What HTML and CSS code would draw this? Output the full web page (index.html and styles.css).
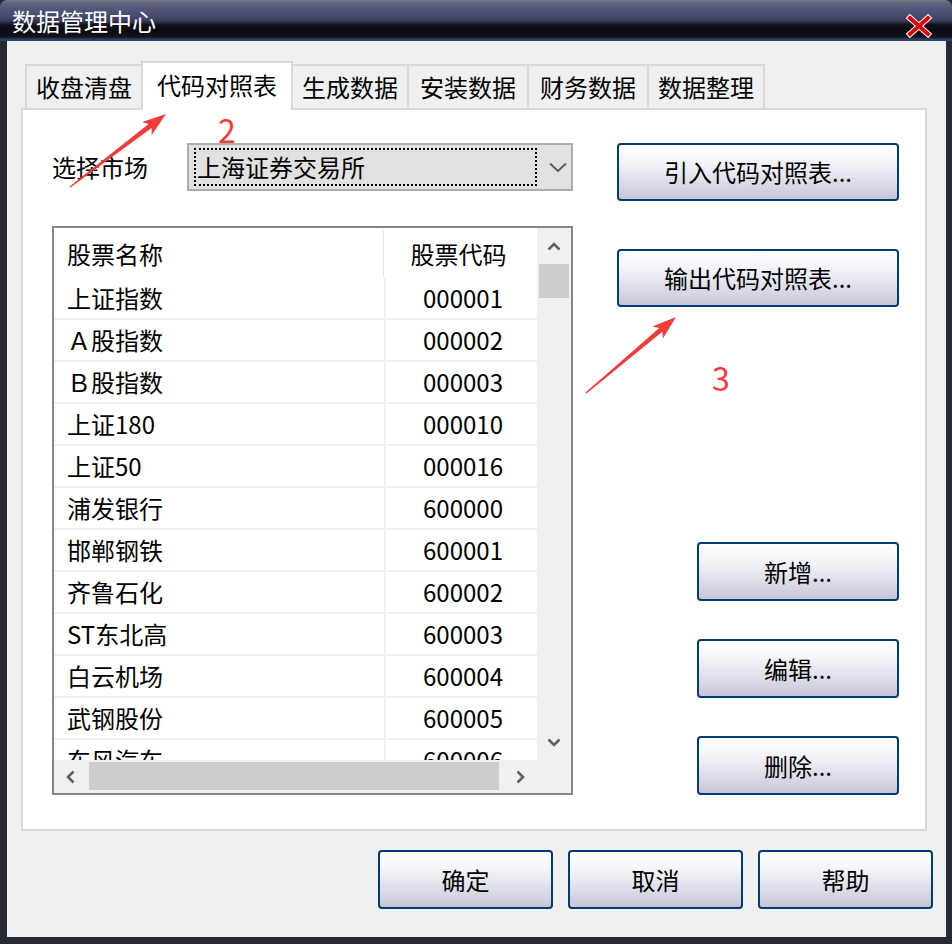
FILE: index.html
```html
<!DOCTYPE html>
<html lang="zh-CN">
<head>
  <meta charset="UTF-8" />
  <title>数据管理中心</title>
  <link rel="stylesheet" href="styles.css">
</head>
<body>
  <div class="window">
    <div class="titlebar">
      <span class="title">数据管理中心</span>
      <svg class="close" width="26" height="24" viewBox="0 0 26 24">
        <path d="M4 4 L22 20 M22 4 L4 20" stroke="#ffffff" stroke-width="6" stroke-linecap="square" fill="none"/>
        <path d="M4 4 L22 20 M22 4 L4 20" stroke="#e40000" stroke-width="4" stroke-linecap="square" fill="none"/>
      </svg>
    </div>

    <div class="client">
      <!-- 页签 -->
      <div class="tabs">
        <div class="tab">收盘清盘</div>
        <div class="tab active">代码对照表</div>
        <div class="tab">生成数据</div>
        <div class="tab roomy">安装数据</div>
        <div class="tab roomy">财务数据</div>
        <div class="tab">数据整理</div>
      </div>

      <div class="panel">
        <div class="left">
          <div class="market">
            <span class="label">选择市场</span>
            <div class="combo">
              <div class="combo-focus">上海证券交易所</div>
              <div class="combo-arrow">
                <svg width="18" height="11" viewBox="0 0 18 11"><polyline points="1,1.5 9,9 17,1.5" fill="none" stroke="#5a5a5a" stroke-width="1.8"/></svg>
              </div>
            </div>
          </div>

          <div class="listbox">
            <div class="view">
              <div class="head">
                <div class="cell-name">股票名称</div>
                <div class="cell-code">股票代码</div>
              </div>
              <div class="row"><div class="cell-name">上证指数</div><div class="cell-code">000001</div></div>
              <div class="row"><div class="cell-name">Ａ股指数</div><div class="cell-code">000002</div></div>
              <div class="row"><div class="cell-name">Ｂ股指数</div><div class="cell-code">000003</div></div>
              <div class="row"><div class="cell-name">上证180</div><div class="cell-code">000010</div></div>
              <div class="row"><div class="cell-name">上证50</div><div class="cell-code">000016</div></div>
              <div class="row"><div class="cell-name">浦发银行</div><div class="cell-code">600000</div></div>
              <div class="row"><div class="cell-name">邯郸钢铁</div><div class="cell-code">600001</div></div>
              <div class="row"><div class="cell-name">齐鲁石化</div><div class="cell-code">600002</div></div>
              <div class="row"><div class="cell-name">ST东北高</div><div class="cell-code">600003</div></div>
              <div class="row"><div class="cell-name">白云机场</div><div class="cell-code">600004</div></div>
              <div class="row"><div class="cell-name">武钢股份</div><div class="cell-code">600005</div></div>
              <div class="row"><div class="cell-name">东风汽车</div><div class="cell-code">600006</div></div>
            </div>

            <div class="vscroll">
              <div class="sb-arrow v">
                <svg width="14" height="9" viewBox="0 0 14 9"><polyline points="1.5,7.5 7,2 12.5,7.5" fill="none" stroke="#606060" stroke-width="2.6"/></svg>
              </div>
              <div class="thumb-v"></div>
              <div class="sb-fill"></div>
              <div class="sb-arrow v">
                <svg width="14" height="9" viewBox="0 0 14 9"><polyline points="1.5,1.5 7,7 12.5,1.5" fill="none" stroke="#606060" stroke-width="2.6"/></svg>
              </div>
            </div>

            <div class="hscroll">
              <div class="sb-arrow h-left">
                <svg width="9" height="14" viewBox="0 0 9 14"><polyline points="7.5,1.5 2,7 7.5,12.5" fill="none" stroke="#606060" stroke-width="2.6"/></svg>
              </div>
              <div class="thumb-h"></div>
              <div class="sb-fill"></div>
              <div class="sb-arrow h-right">
                <svg width="9" height="14" viewBox="0 0 9 14"><polyline points="1.5,1.5 7,7 1.5,12.5" fill="none" stroke="#606060" stroke-width="2.6"/></svg>
              </div>
            </div>
            <div class="corner"></div>
          </div>
        </div>

        <div class="right">
          <button class="btn btn-wide">引入代码对照表...</button>
          <button class="btn btn-wide second">输出代码对照表...</button>
          <div class="stack">
            <button class="btn btn-small">新增...</button>
            <button class="btn btn-small">编辑...</button>
            <button class="btn btn-small">删除...</button>
          </div>
        </div>
      </div>

      <div class="footer">
        <button class="btn btn-foot">确定</button>
        <button class="btn btn-foot">取消</button>
        <button class="btn btn-foot">帮助</button>
      </div>
    </div>

    <!-- 标注箭头 -->
    <svg class="marks" width="952" height="944" viewBox="0 0 952 944">
      <polygon fill="#f23b3b" points="166,114 151.7,134.9 151.6,128.1 70.4,187.6 69.6,186.4 148.6,124.1 142.1,122.1"/>
      <polygon fill="#f23b3b" points="676,317 662.9,338.6 662.4,331.8 586.5,393.5 585.5,392.5 659.2,328 652.5,326.4"/>
      <text class="mark-num" x="218" y="143">2</text>
      <text class="mark-num" x="712" y="391">3</text>
    </svg>
  </div>
</body>
</html>
```

FILE: styles.css
```css
* {
  box-sizing: border-box;
}

body {
  margin: 0;
  background-color: #272a32;
  font-family: "Noto Sans CJK SC", "Noto Sans", sans-serif;
  color: #000;
}

.window {
  position: relative;
  width: 952px;
  height: 944px;
}

.titlebar {
  height: 41px;
  display: flex;
  align-items: center;
  border-radius: 7px 7px 0 0;
  color: #fff;
  background: linear-gradient(to bottom,
    #747b8b 0px, #60647f 3px, #52567a 9px, #46496b 17px, #383a58 21px,
    #101018 25px, #0a0a11 31px, #13141d 37px, #2a3e62 39px, #2c4670 41px);
}

.title {
  font-size: 24px;
  line-height: 1;
  padding-left: 12px;
}

.close {
  margin-left: auto;
  margin-right: 20px;
  align-self: flex-start;
  margin-top: 14px;
}

.client {
  margin-left: 7px;
  width: 939px;
  height: 896px;
  padding-top: 20px;
  background-color: #f0f0f0;
}

/* 页签 */
.tabs {
  display: flex;
  align-items: flex-end;
  height: 47px;
  padding-left: 18px;
}

.tab {
  height: 44px;
  padding: 0 9px;
  margin-right: -2px;
  border: 2px solid #d9d9d9;
  border-bottom: none;
  background-color: #f0f0f0;
  font-size: 24px;
  line-height: 1;
  display: flex;
  align-items: center;
}

.tab.roomy {
  padding: 0 11px;
}

.tab.active {
  position: relative;
  z-index: 1;
  height: 49px;
  margin-bottom: -2px;
  padding: 0 14px 3px;
  background-color: #fff;
}

.panel {
  margin-left: 14px;
  width: 906px;
  height: 723px;
  border: 2px solid #d9d9d9;
  background-color: #fff;
  display: flex;
  justify-content: space-between;
  padding: 33px 26px 34px 29px;
}

.left {
  width: 521px;
  display: flex;
  flex-direction: column;
}

.market {
  display: flex;
  align-items: center;
  height: 48px;
}

.label {
  width: 135px;
  font-size: 24px;
  line-height: 1;
}

.combo {
  width: 386px;
  height: 48px;
  border: 2px solid #adadad;
  background-color: #e1e1e1;
  display: flex;
  align-items: center;
  padding-left: 5px;
}

.combo-focus {
  width: 343px;
  height: 38px;
  border: 2px dotted #000;
  font-size: 24px;
  line-height: 1;
  display: flex;
  align-items: center;
  padding-left: 1px;
}

.combo-arrow {
  flex: 1;
  display: flex;
  justify-content: center;
  padding-left: 8px;
}

/* 列表 */
.listbox {
  margin-top: 35px;
  height: 569px;
  border: 2px solid #82878f;
  display: grid;
  grid-template-columns: 1fr 34px;
  grid-template-rows: 1fr 33px;
}

.view {
  overflow: hidden;
  background-color: #fff;
}

.head,
.row {
  display: flex;
  font-size: 24px;
  line-height: 1;
}

.head {
  height: 50px;
  padding-top: 2px;
}

.head .cell-name {
  width: 330px;
  height: 47px;
  border-right: 1px solid #e5e5e5;
}

.cell-name {
  padding-left: 13px;
  display: flex;
  align-items: center;
}

.cell-code {
  flex: 1;
  display: flex;
  align-items: center;
  justify-content: center;
}

.head .cell-code {
  height: 47px;
  padding-right: 4px;
}

.row {
  height: 42px;
  border-bottom: 2px solid #f0f0f0;
}

.row .cell-name {
  width: 332px;
  border-right: 2px solid #f0f0f0;
}

.row .cell-code {
  padding-left: 3px;
}

.vscroll,
.hscroll,
.corner {
  background-color: #f0f0f0;
}

.vscroll {
  display: flex;
  flex-direction: column;
}

.hscroll {
  display: flex;
}

.sb-arrow {
  display: flex;
  align-items: center;
  justify-content: center;
}

.sb-arrow.v {
  height: 36px;
}

.sb-arrow.h-left {
  width: 33px;
}

.sb-arrow.h-right {
  width: 34px;
}

.sb-fill {
  flex: 1;
}

.thumb-v {
  height: 34px;
  margin: 0 2px;
  background-color: #cdcdcd;
}

.thumb-h {
  width: 410px;
  margin: 2px 0 3px 2px;
  background-color: #cdcdcd;
}

/* 按钮 */
.right {
  width: 282px;
  display: flex;
  flex-direction: column;
  align-items: flex-end;
}

.btn {
  font-family: inherit;
  font-size: 24px;
  line-height: 1;
  color: #000;
  padding: 0;
  border: 2px solid #003c74;
  border-radius: 4px;
  background: linear-gradient(to bottom, #fefeff 0%, #f7f7fb 25%, #e9e9f1 50%, #d8d8e5 75%, #c5c5d7 100%);
  cursor: pointer;
}

.btn-wide {
  width: 282px;
  height: 58px;
}

.btn-wide.second {
  margin-top: 48px;
}

.stack {
  margin-top: auto;
  display: flex;
  flex-direction: column;
  gap: 38px;
}

.btn-small {
  width: 202px;
  height: 59px;
}

.footer {
  display: flex;
  justify-content: flex-end;
  gap: 15px;
  padding-right: 13px;
  margin-top: 19px;
}

.btn-foot {
  width: 175px;
  height: 59px;
}

/* 标注 */
.marks {
  position: absolute;
  top: 0;
  left: 0;
  pointer-events: none;
}

.mark-num {
  font-family: "Noto Sans CJK SC", sans-serif;
  font-size: 32px;
  fill: #f23b3b;
}
```
